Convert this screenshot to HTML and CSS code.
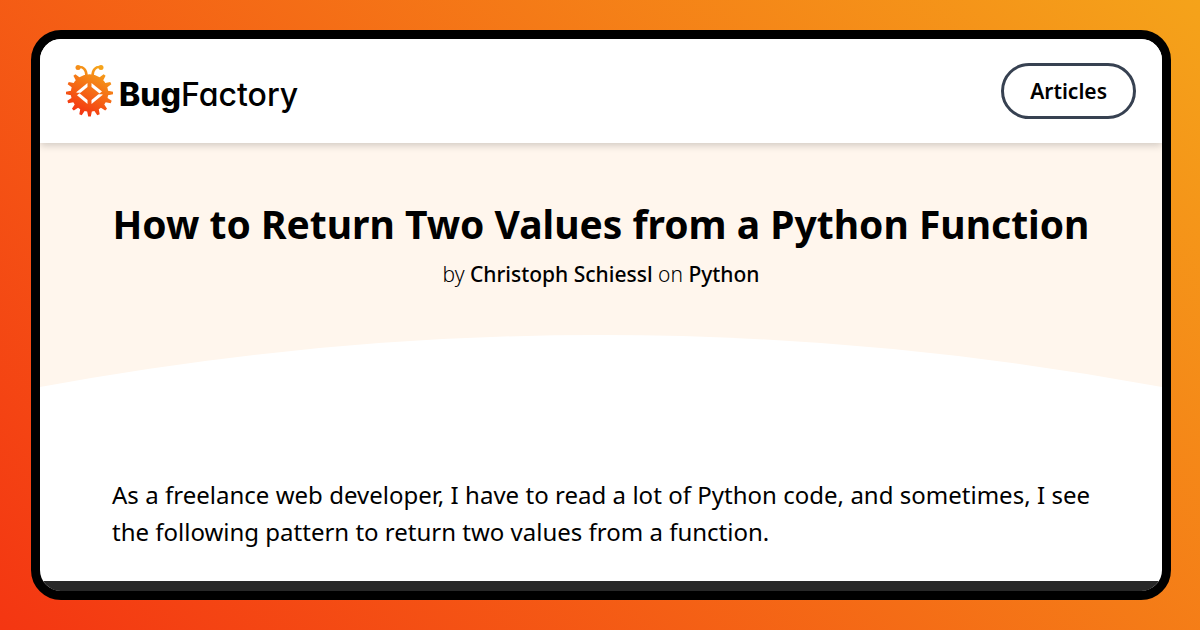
FILE: index.html
```html
<!DOCTYPE html>
<html lang="en">
<head>
    <meta charset="UTF-8">
    <meta name="viewport" content="width=device-width, initial-scale=1.0">
    <title>How to Return Two Values from a Python Function</title>
    <link rel="stylesheet" href="styles.css">
</head>
<body>
    <div class="screen">
        <header class="navbar">
            <a href="#" class="logo">
                <!-- Bug shaped like a gear -->
                <svg class="logo-icon" viewBox="0 0 48 54" aria-hidden="true">
                    <defs>
                        <linearGradient id="bug-gradient" gradientUnits="userSpaceOnUse" x1="12" y1="48" x2="34" y2="4">
                            <stop offset="0" stop-color="#f43612"/>
                            <stop offset="1" stop-color="#f5a31a"/>
                        </linearGradient>
                        <!-- One tooth, rotated around the body -->
                        <path id="tooth" d="M20.800 46L22.200 52.500H24.800L26.200 46Z"/>
                        <clipPath id="bug-shape">
                            <circle cx="23.500" cy="29" r="18.700"/>
                            <use href="#tooth"/>
                            <use href="#tooth" transform="rotate(22.500 23.500 29)"/>
                            <use href="#tooth" transform="rotate(45 23.500 29)"/>
                            <use href="#tooth" transform="rotate(67.500 23.500 29)"/>
                            <use href="#tooth" transform="rotate(90 23.500 29)"/>
                            <use href="#tooth" transform="rotate(115 23.500 29)"/>
                            <use href="#tooth" transform="rotate(140 23.500 29)"/>
                            <use href="#tooth" transform="rotate(220 23.500 29)"/>
                            <use href="#tooth" transform="rotate(245 23.500 29)"/>
                            <use href="#tooth" transform="rotate(270 23.500 29)"/>
                            <use href="#tooth" transform="rotate(292.500 23.500 29)"/>
                            <use href="#tooth" transform="rotate(315 23.500 29)"/>
                            <use href="#tooth" transform="rotate(337.500 23.500 29)"/>
                        </clipPath>
                    </defs>
                    <g fill="none" stroke="url(#bug-gradient)" stroke-width="2.500">
                        <path d="M12.500 3.200C17 2.500 20.500 5.500 20.500 12"/>
                        <path d="M34.500 3.200C30 2.500 26.500 5.500 26.500 12"/>
                    </g>
                    <circle cx="12" cy="3.500" r="2.500" fill="url(#bug-gradient)"/>
                    <circle cx="35" cy="3.500" r="2.500" fill="url(#bug-gradient)"/>
                    <rect width="48" height="54" fill="url(#bug-gradient)" clip-path="url(#bug-shape)"/>
                    <g fill="#ffffff">
                        <path d="M21.500 19V23L14.500 28.800H10.500V28Z"/>
                        <path d="M25.500 19V23L33.500 29.500L36 27.500Z"/>
                        <path d="M13.500 29.200L11 31.200L21.500 40V36Z"/>
                        <path d="M25.500 40V36L32.500 30.200H36.500V31Z"/>
                    </g>
                </svg>
                <span class="logo-text"><strong>Bug</strong>Factory</span>
            </a>
            <nav>
                <a href="#" class="nav-button">Articles</a>
            </nav>
        </header>

        <main>
            <div class="hero">
                <h1>How to Return Two Values from a Python Function</h1>
                <p class="byline">by <a href="#">Christoph Schiessl</a> on <a href="#">Python</a></p>
                <!-- Curved lower edge of the hero -->
                <svg class="hero-curve" viewBox="0 0 1122 52" preserveAspectRatio="none" aria-hidden="true">
                    <path d="M0 52Q561 -52 1122 52Z" fill="#ffffff"/>
                </svg>
            </div>

            <article class="content">
                <p>As a freelance web developer, I have to read a lot of Python code, and sometimes, I see the following pattern to return two values from a function.</p>
            </article>
            <div class="code-block"></div>
        </main>
    </div>
</body>
</html>
```

FILE: styles.css
```css
* {
    box-sizing: border-box;
}

body {
    font-family: "Noto Sans", sans-serif;
    color: #000000;
    background: linear-gradient(45deg, #f43612, #f5a31a);
    margin: 0;
    padding: 30px 29px 30px 31px;
    height: 100vh;
}

/* Rounded device frame */
.screen {
    height: 100%;
    overflow: hidden;
    border: 9px solid #000000;
    border-radius: 30px;
    background-color: #ffffff;
}

.navbar {
    position: relative;
    display: flex;
    align-items: center;
    justify-content: space-between;
    padding: 24px 26px;
    background-color: #ffffff;
    box-shadow: 0 2px 8px rgba(0, 0, 0, 0.2);
}

.logo {
    display: flex;
    align-items: center;
    gap: 5px;
    color: #000000;
    text-decoration: none;
}

.logo-icon {
    width: 48px;
    height: 54px;
}

.logo-text {
    padding-top: 7px;
    font-family: Inter, sans-serif;
    font-feature-settings: "cv11";
    font-size: 32px;
    font-weight: 500;
    line-height: 40px;
}

.logo-text strong {
    font-weight: 800;
}

.nav-button {
    display: block;
    padding: 10px 26px;
    border: 3px solid #374151;
    border-radius: 28px;
    color: #000000;
    font-size: 21px;
    font-weight: 600;
    line-height: 30px;
    text-decoration: none;
}

/* Title area */
.hero {
    padding-top: 53px;
    background-color: #fff6ed;
    text-align: center;
}

.hero h1 {
    margin: 0;
    font-size: 39px;
    font-weight: 700;
    line-height: 56px;
}

.byline {
    margin: 6px 0 45px;
    font-size: 21px;
    font-weight: 300;
    line-height: 32px;
}

.byline a {
    color: #000000;
    font-weight: 500;
    text-decoration: none;
}

.hero-curve {
    display: block;
    width: 100%;
    height: 52px;
}

.content {
    padding: 89px 72px 31px;
}

.content p {
    margin: 0;
    font-size: 24px;
    line-height: 37px;
    text-align: justify;
}

.code-block {
    height: 120px;
    background-color: #282828;
}
```
